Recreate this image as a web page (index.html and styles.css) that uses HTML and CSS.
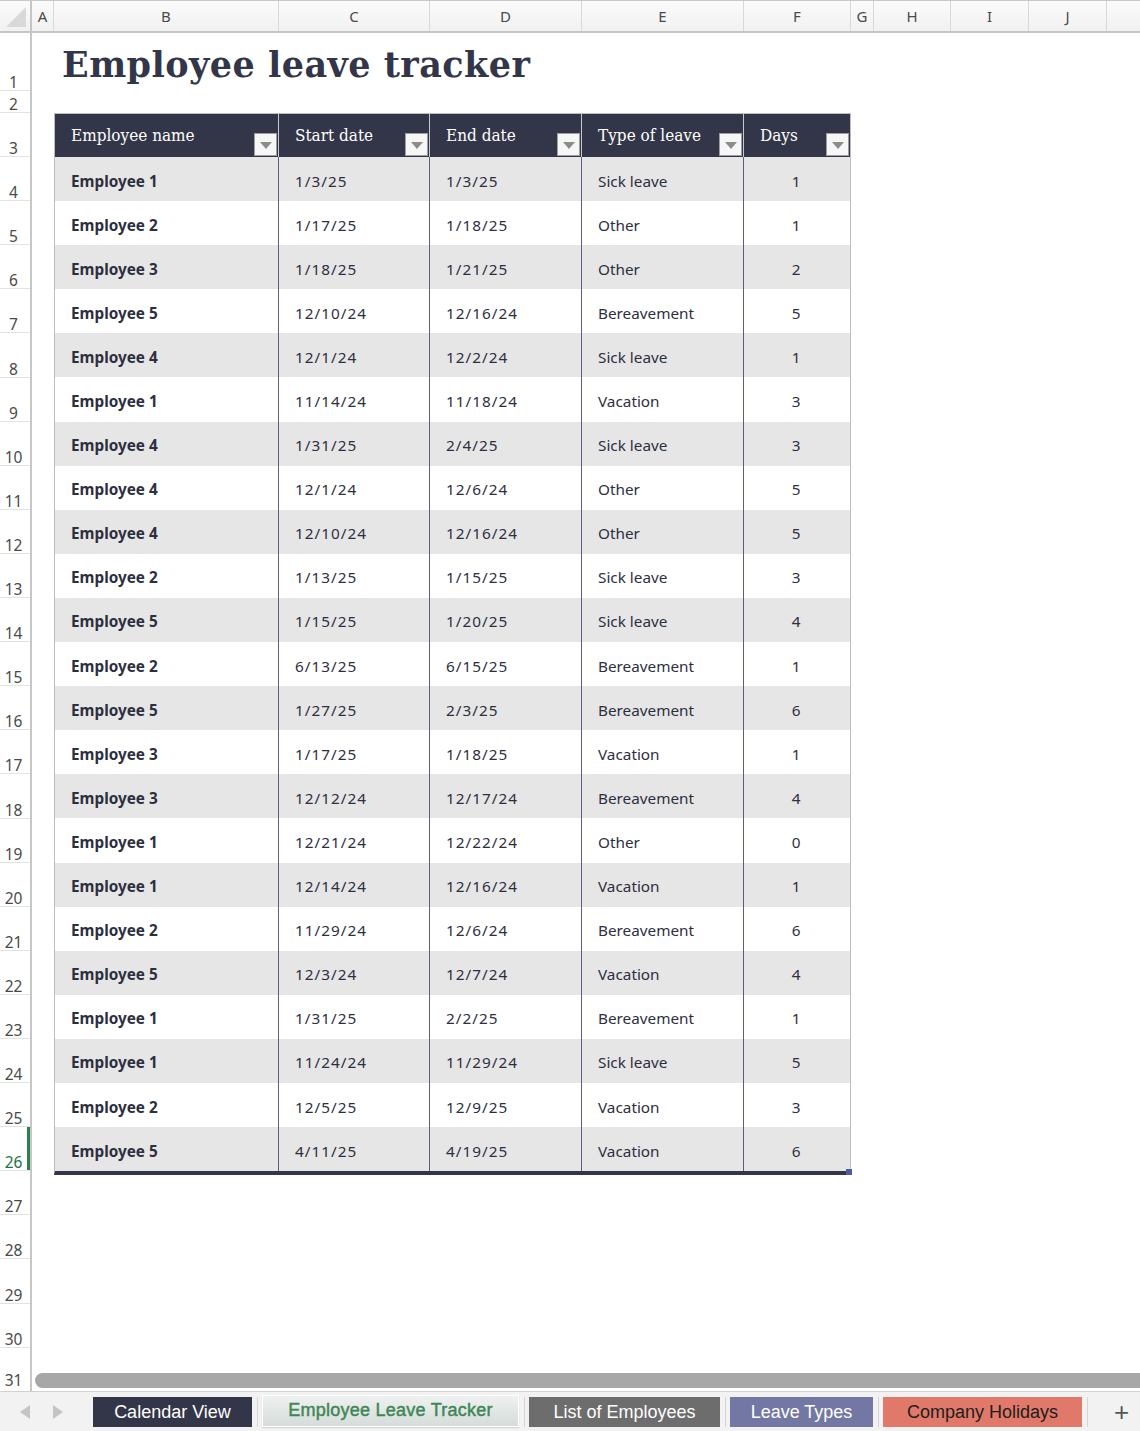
FILE: index.html
```html
<!DOCTYPE html>
<html lang="en">
<head>
<meta charset="utf-8">
<title>Employee leave tracker</title>
<link rel="stylesheet" href="styles.css">
</head>
<body>
<div class="app">
  <div class="colbar">
    <div class="corner"><svg width="22" height="22" viewBox="0 0 22 22"><polygon points="21,1 21,21 1,21" fill="#d9d9d9"/></svg></div>
    <div class="ch c-a">A</div>
    <div class="ch c-b">B</div>
    <div class="ch c-c">C</div>
    <div class="ch c-d">D</div>
    <div class="ch c-e">E</div>
    <div class="ch c-f">F</div>
    <div class="ch c-g">G</div>
    <div class="ch c-h">H</div>
    <div class="ch c-i">I</div>
    <div class="ch c-j">J</div>
    <div class="ch c-k"></div>
  </div>
  <div class="main">
    <div class="rowhdr">
      <div class="rh r-tall">1</div>
      <div class="rh r-short">2</div>
      <div class="rh">3</div>
      <div class="rh">4</div>
      <div class="rh">5</div>
      <div class="rh">6</div>
      <div class="rh">7</div>
      <div class="rh">8</div>
      <div class="rh">9</div>
      <div class="rh">10</div>
      <div class="rh">11</div>
      <div class="rh">12</div>
      <div class="rh">13</div>
      <div class="rh">14</div>
      <div class="rh">15</div>
      <div class="rh">16</div>
      <div class="rh">17</div>
      <div class="rh">18</div>
      <div class="rh">19</div>
      <div class="rh">20</div>
      <div class="rh">21</div>
      <div class="rh">22</div>
      <div class="rh">23</div>
      <div class="rh">24</div>
      <div class="rh">25</div>
      <div class="rh rh-sel">26</div>
      <div class="rh">27</div>
      <div class="rh">28</div>
      <div class="rh">29</div>
      <div class="rh">30</div>
      <div class="rh r-last">31</div>
    </div>
    <div class="pane">
      <div class="content">
        <h1 class="title">Employee leave tracker</h1>
        <div class="tbl">
          <div class="row head">
            <div class="hc">Employee name<span class="filter"><svg width="12" height="7" viewBox="0 0 12 7"><polygon points="0,0 12,0 6,7" fill="#8c8c8c"/></svg></span></div>
            <div class="hc">Start date<span class="filter"><svg width="12" height="7" viewBox="0 0 12 7"><polygon points="0,0 12,0 6,7" fill="#8c8c8c"/></svg></span></div>
            <div class="hc">End date<span class="filter"><svg width="12" height="7" viewBox="0 0 12 7"><polygon points="0,0 12,0 6,7" fill="#8c8c8c"/></svg></span></div>
            <div class="hc">Type of leave<span class="filter"><svg width="12" height="7" viewBox="0 0 12 7"><polygon points="0,0 12,0 6,7" fill="#8c8c8c"/></svg></span></div>
            <div class="hc">Days<span class="filter"><svg width="12" height="7" viewBox="0 0 12 7"><polygon points="0,0 12,0 6,7" fill="#8c8c8c"/></svg></span></div>
          </div>
          <div class="row"><div class="c name">Employee 1</div><div class="c date">1/3/25</div><div class="c date">1/3/25</div><div class="c">Sick leave</div><div class="c num">1</div></div>
          <div class="row"><div class="c name">Employee 2</div><div class="c date">1/17/25</div><div class="c date">1/18/25</div><div class="c">Other</div><div class="c num">1</div></div>
          <div class="row"><div class="c name">Employee 3</div><div class="c date">1/18/25</div><div class="c date">1/21/25</div><div class="c">Other</div><div class="c num">2</div></div>
          <div class="row"><div class="c name">Employee 5</div><div class="c date">12/10/24</div><div class="c date">12/16/24</div><div class="c">Bereavement</div><div class="c num">5</div></div>
          <div class="row"><div class="c name">Employee 4</div><div class="c date">12/1/24</div><div class="c date">12/2/24</div><div class="c">Sick leave</div><div class="c num">1</div></div>
          <div class="row"><div class="c name">Employee 1</div><div class="c date">11/14/24</div><div class="c date">11/18/24</div><div class="c">Vacation</div><div class="c num">3</div></div>
          <div class="row"><div class="c name">Employee 4</div><div class="c date">1/31/25</div><div class="c date">2/4/25</div><div class="c">Sick leave</div><div class="c num">3</div></div>
          <div class="row"><div class="c name">Employee 4</div><div class="c date">12/1/24</div><div class="c date">12/6/24</div><div class="c">Other</div><div class="c num">5</div></div>
          <div class="row"><div class="c name">Employee 4</div><div class="c date">12/10/24</div><div class="c date">12/16/24</div><div class="c">Other</div><div class="c num">5</div></div>
          <div class="row"><div class="c name">Employee 2</div><div class="c date">1/13/25</div><div class="c date">1/15/25</div><div class="c">Sick leave</div><div class="c num">3</div></div>
          <div class="row"><div class="c name">Employee 5</div><div class="c date">1/15/25</div><div class="c date">1/20/25</div><div class="c">Sick leave</div><div class="c num">4</div></div>
          <div class="row"><div class="c name">Employee 2</div><div class="c date">6/13/25</div><div class="c date">6/15/25</div><div class="c">Bereavement</div><div class="c num">1</div></div>
          <div class="row"><div class="c name">Employee 5</div><div class="c date">1/27/25</div><div class="c date">2/3/25</div><div class="c">Bereavement</div><div class="c num">6</div></div>
          <div class="row"><div class="c name">Employee 3</div><div class="c date">1/17/25</div><div class="c date">1/18/25</div><div class="c">Vacation</div><div class="c num">1</div></div>
          <div class="row"><div class="c name">Employee 3</div><div class="c date">12/12/24</div><div class="c date">12/17/24</div><div class="c">Bereavement</div><div class="c num">4</div></div>
          <div class="row"><div class="c name">Employee 1</div><div class="c date">12/21/24</div><div class="c date">12/22/24</div><div class="c">Other</div><div class="c num">0</div></div>
          <div class="row"><div class="c name">Employee 1</div><div class="c date">12/14/24</div><div class="c date">12/16/24</div><div class="c">Vacation</div><div class="c num">1</div></div>
          <div class="row"><div class="c name">Employee 2</div><div class="c date">11/29/24</div><div class="c date">12/6/24</div><div class="c">Bereavement</div><div class="c num">6</div></div>
          <div class="row"><div class="c name">Employee 5</div><div class="c date">12/3/24</div><div class="c date">12/7/24</div><div class="c">Vacation</div><div class="c num">4</div></div>
          <div class="row"><div class="c name">Employee 1</div><div class="c date">1/31/25</div><div class="c date">2/2/25</div><div class="c">Bereavement</div><div class="c num">1</div></div>
          <div class="row"><div class="c name">Employee 1</div><div class="c date">11/24/24</div><div class="c date">11/29/24</div><div class="c">Sick leave</div><div class="c num">5</div></div>
          <div class="row"><div class="c name">Employee 2</div><div class="c date">12/5/25</div><div class="c date">12/9/25</div><div class="c">Vacation</div><div class="c num">3</div></div>
          <div class="row"><div class="c name">Employee 5</div><div class="c date">4/11/25</div><div class="c date">4/19/25</div><div class="c">Vacation</div><div class="c num">6</div></div>
        </div>
      </div>
      <div class="hscroll"><div class="thumb"></div></div>
    </div>
  </div>
  <div class="tabs">
    <div class="navs">
      <svg width="12" height="16" viewBox="0 0 12 16"><polygon points="11,1 11,15 1,8" fill="#c4c4c4"/></svg>
      <svg width="12" height="16" viewBox="0 0 12 16"><polygon points="1,1 1,15 11,8" fill="#c4c4c4"/></svg>
    </div>
    <div class="tab t-cal">Calendar View</div>
    <div class="sep"></div>
    <div class="tab t-act">Employee Leave Tracker</div>
    <div class="sep"></div>
    <div class="tab t-list">List of Employees</div>
    <div class="sep"></div>
    <div class="tab t-types">Leave Types</div>
    <div class="sep"></div>
    <div class="tab t-hol">Company Holidays</div>
    <div class="sep"></div>
    <div class="plus">+</div>
  </div>
</div>
</body>
</html>
```

FILE: styles.css
```css
* { box-sizing: border-box; }
html, body { margin: 0; padding: 0; }
body {
  width: 1140px;
  height: 1431px;
  overflow: hidden;
  background: #ffffff;
  font-family: "Noto Sans", "DejaVu Sans", sans-serif;
}
.app {
  display: flex;
  flex-direction: column;
  height: 1431px;
}

/* column header bar */
.colbar {
  display: flex;
  height: 33px;
  flex: 0 0 33px;
  border-top: 1px solid #c9c9c9;
  border-bottom: 2px solid #c6c6c6;
  background: linear-gradient(#fbfbfb, #f1f1f1);
}
.corner {
  width: 32px;
  flex: 0 0 32px;
  border-right: 2px solid #c6c6c6;
  display: flex;
  align-items: flex-end;
  justify-content: flex-end;
  padding: 0 3px 3px 0;
}
.ch {
  border-right: 1px solid #d9d9d9;
  display: flex;
  align-items: center;
  justify-content: center;
  font-size: 15px;
  color: #4a4a4a;
  flex: 0 0 auto;
}
.c-a { width: 22px; }
.c-b { width: 225px; }
.c-c { width: 151px; }
.c-d { width: 152px; }
.c-e { width: 162px; }
.c-f { width: 107px; }
.c-g { width: 23px; }
.c-h { width: 77px; }
.c-i { width: 78px; }
.c-j { width: 78px; }
.c-k { flex: 1 1 auto; border-right: none; }

/* main area */
.main {
  flex: 1 1 auto;
  display: flex;
  min-height: 0;
  overflow: hidden;
}
.rowhdr {
  width: 32px;
  flex: 0 0 32px;
  border-right: 2px solid #c6c6c6;
  background: #ffffff;
  overflow: hidden;
}
.rh {
  height: 44.1px;
  border-bottom: 1px solid #e3e3e3;
  display: flex;
  align-items: flex-end;
  justify-content: center;
  padding: 0 3px 0 0;
  font-size: 15.5px;
  color: #4a4a4a;
  line-height: 16px;
}
.r-tall { height: 58px; }
.r-short { height: 22px; }
.r-last { height: 40px; border-bottom: none; }
.rh-sel {
  color: #217346;
  box-shadow: inset -3px 0 0 #2e7d4f;
}

.pane {
  flex: 1 1 auto;
  display: flex;
  flex-direction: column;
  min-width: 0;
}
.content {
  flex: 1 1 auto;
  overflow: hidden;
  min-height: 0;
}
.title {
  margin: 0;
  height: 80px;
  padding: 14px 0 0 30px;
  font-family: "DejaVu Serif", "Liberation Serif", serif;
  font-weight: bold;
  font-size: 35px;
  line-height: 35px;
  color: #333649;
  letter-spacing: 0.45px;
}

/* table */
.tbl {
  position: relative;
  margin-left: 22px;
  width: 797px;
  border-left: 1px solid #bdbdbd;
  border-right: 1px solid #bdbdbd;
  border-bottom: 4px solid #333649;
}
.tbl::after {
  content: "";
  position: absolute;
  right: -2px;
  bottom: -4px;
  width: 6px;
  height: 6px;
  background: #4b5aa3;
}
.row {
  display: grid;
  grid-template-columns: 224px 151px 152px 162px 106px;
  height: 44.1px;
  background: #ffffff;
}
.row:nth-child(even) { background: #e6e6e6; }
.row.head {
  height: 44px;
  background: #333649;
  border-top: 1px solid #bdbdbd;
}
.hc {
  display: flex;
  align-items: center;
  justify-content: space-between;
  padding-left: 16px;
  color: #ffffff;
  font-family: "DejaVu Serif Condensed", "DejaVu Serif", serif;
  font-size: 17px;
  border-right: 1px solid #c7c8d0;
  padding-bottom: 1px;
}
.hc:last-child { border-right: none; }
.filter {
  align-self: flex-end;
  width: 23px;
  height: 23px;
  margin: 0 1px 0 0;
  background: #f6f6f6;
  border: 1px solid #9e9e9e;
  display: flex;
  align-items: center;
  justify-content: center;
  padding-top: 2px;
}
.c {
  display: flex;
  align-items: center;
  padding-left: 16px;
  padding-top: 3px;
  font-size: 15.3px;
  color: #2d2f3f;
  border-right: 1px solid #5b5e7c;
}
.c:last-child { border-right: none; }
.name { font-weight: bold; padding-left: 16px; }
.date { letter-spacing: 1px; }
.num { justify-content: center; padding-left: 0; padding-right: 2px; }

/* horizontal scrollbar */
.hscroll {
  flex: 0 0 21px;
  height: 21px;
  padding: 3px 0 3px 3px;
  background: #ffffff;
}
.thumb {
  height: 15px;
  border-radius: 8px 0 0 8px;
  background: #a7a7a7;
}

/* sheet tabs */
.tabs {
  flex: 0 0 40px;
  height: 40px;
  display: flex;
  align-items: center;
  background: #f2f2f2;
  border-top: 1px solid #d2d2d2;
  font-family: "Liberation Sans", Arial, sans-serif;
  font-size: 18px;
  padding-top: 1px;
}
.navs {
  width: 93px;
  flex: 0 0 93px;
  display: flex;
  gap: 21px;
  padding-left: 19px;
}
.tab {
  height: 30px;
  display: flex;
  align-items: center;
  justify-content: center;
  color: #ffffff;
  flex: 0 0 auto;
}
.sep {
  width: 1px;
  height: 30px;
  background: #d6d6d6;
  margin: 0 4.5px;
  flex: 0 0 1px;
}
.t-cal { width: 159px; background: #333649; }
.t-act {
  width: 257px;
  height: 32px;
  margin-top: -3px;
  background: linear-gradient(#eef1f0, #d5dcd9);
  border: 1px solid #ffffff;
  color: #3f8657;
  letter-spacing: 0.25px;
  -webkit-text-stroke: 0.45px #3f8657;
  box-shadow: 0 1px 1px rgba(0,0,0,0.12);
}
.t-list { width: 191px; background: #6d6d6d; }
.t-types { width: 143px; background: #7277a3; }
.t-hol { width: 199px; background: #e0796a; color: #1d1d1d; }
.plus {
  margin-left: 22px;
  font-size: 26px;
  color: #555555;
  line-height: 26px;
}
```
